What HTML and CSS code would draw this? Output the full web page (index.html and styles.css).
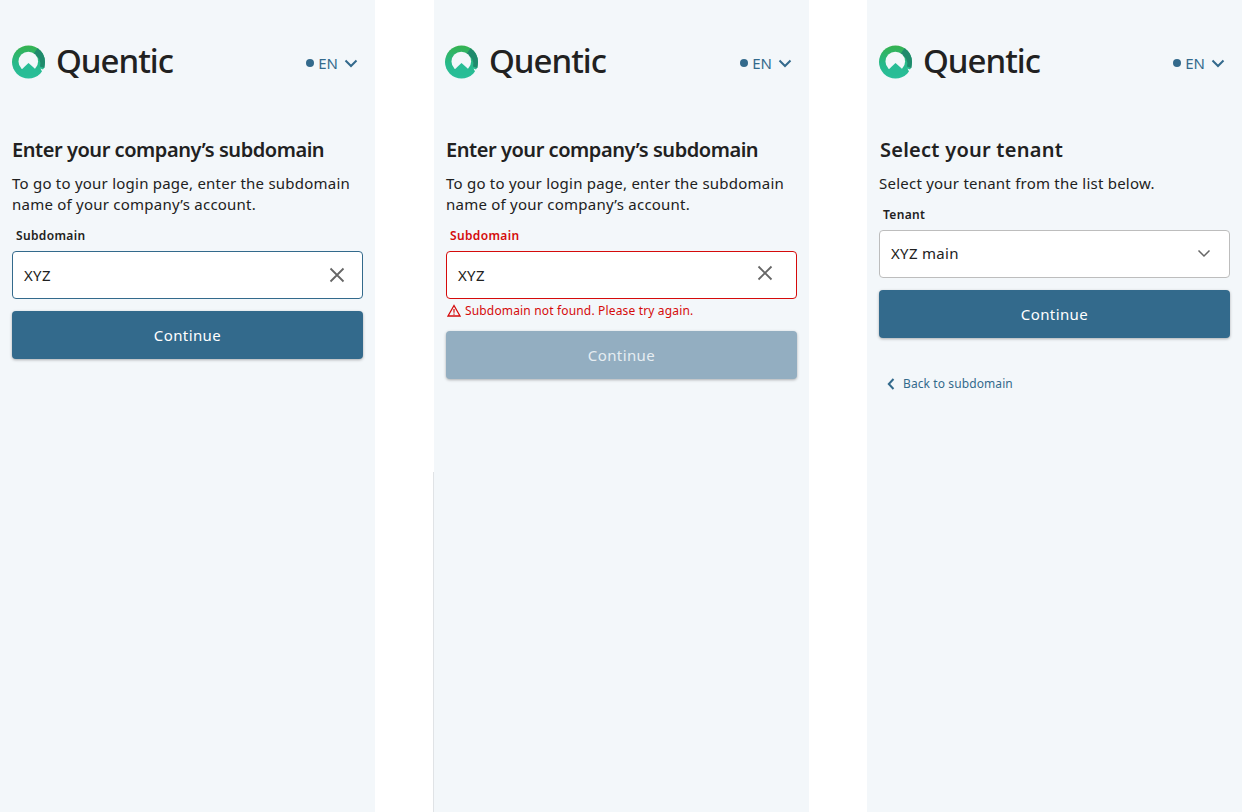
FILE: index.html
```html
<!DOCTYPE html>
<html lang="en">
<head>
    <meta charset="UTF-8">
    <meta name="viewport" content="width=device-width, initial-scale=1.0">
    <title>Quentic - Login</title>
    <link rel="stylesheet" href="styles.css">
</head>
<body>
    <div class="screens">
        <section class="panel">
            <header class="top">
                <div class="logo">
                    <svg class="logo-mark" viewBox="0 0 34 36" width="34" height="36">
                        <defs>
                            <linearGradient id="lg1" x1="0" y1="0" x2="0" y2="1">
                                <stop offset="0" stop-color="#35b24f"/>
                                <stop offset="0.55" stop-color="#27b98a"/>
                                <stop offset="1" stop-color="#2abf9b"/>
                            </linearGradient>
                            <symbol id="mark" viewBox="0 0 34 36">
                                <circle cx="16.500" cy="19" r="16.500" fill="url(#lg1)"/>
                                <path d="M25.500 5.200a16.500 16.500 0 0 1 7.500 13.800l-.5 6-4.500-1.500a10.500 10.500 0 0 0-6.500-12.500z" fill="#1f8a6c"/>
                                <circle cx="16.300" cy="18.500" r="9.800" fill="#f3f7fa"/>
                                <path d="M7 29L16.500 20l9.500 8.500-1 4H9z" fill="#28bd96"/>
                                <path d="M28.500 25.500l5 2-2.500 3z" fill="#f3f7fa"/>
                            </symbol>
                        </defs>
                        <use href="#mark"/>
                    </svg>
                    <span class="logo-text">Quentic</span>
                </div>
                <div class="lang">
                    <span class="lang-dot"></span>
                    <span>EN</span>
                    <svg viewBox="0 0 14 9" width="14" height="9"><path d="M1.500 1.500L7 7l5.500-5.500" fill="none" stroke="#336a8c" stroke-width="2"/></svg>
                </div>
            </header>
            <h2>Enter your company’s subdomain</h2>
            <p class="intro">To go to your login page, enter the subdomain name of your company’s account.</p>
            <label class="field-label">Subdomain</label>
            <div class="field focus">
                <span>XYZ</span>
                <svg viewBox="0 0 16 16" width="16" height="16"><path d="M1.500 1.500l13 13m0-13l-13 13" fill="none" stroke="#666" stroke-width="1.800"/></svg>
            </div>
            <button class="btn">Continue</button>
        </section>

        <section class="panel panel-middle">
            <header class="top">
                <div class="logo">
                    <svg class="logo-mark" viewBox="0 0 34 36" width="34" height="36"><use href="#mark"/></svg>
                    <span class="logo-text">Quentic</span>
                </div>
                <div class="lang">
                    <span class="lang-dot"></span>
                    <span>EN</span>
                    <svg viewBox="0 0 14 9" width="14" height="9"><path d="M1.500 1.500L7 7l5.500-5.500" fill="none" stroke="#336a8c" stroke-width="2"/></svg>
                </div>
            </header>
            <h2>Enter your company’s subdomain</h2>
            <p class="intro">To go to your login page, enter the subdomain name of your company’s account.</p>
            <label class="field-label error-text">Subdomain</label>
            <div class="field error">
                <span>XYZ</span>
                <svg class="clear-up" viewBox="0 0 16 16" width="16" height="16"><path d="M1.500 1.500l13 13m0-13l-13 13" fill="none" stroke="#666" stroke-width="1.800"/></svg>
            </div>
            <div class="error-msg">
                <svg viewBox="0 0 14 13" width="14" height="13"><path d="M7 1.500L13 12H1z" fill="none" stroke="#d50b0b" stroke-width="1.300"/><path d="M7 5v3.800M7 9.600v1.200" stroke="#d50b0b" stroke-width="1.200"/></svg>
                <span>Subdomain not found. Please try again.</span>
            </div>
            <button class="btn btn-disabled">Continue</button>
        </section>

        <section class="panel panel-last">
            <header class="top">
                <div class="logo">
                    <svg class="logo-mark" viewBox="0 0 34 36" width="34" height="36"><use href="#mark"/></svg>
                    <span class="logo-text">Quentic</span>
                </div>
                <div class="lang">
                    <span class="lang-dot"></span>
                    <span>EN</span>
                    <svg viewBox="0 0 14 9" width="14" height="9"><path d="M1.500 1.500L7 7l5.500-5.500" fill="none" stroke="#336a8c" stroke-width="2"/></svg>
                </div>
            </header>
            <h2 class="title-wide">Select your tenant</h2>
            <p class="intro">Select your tenant from the list below.</p>
            <label class="field-label">Tenant</label>
            <div class="field select">
                <span>XYZ main</span>
                <svg viewBox="0 0 14 9" width="14" height="9"><path d="M1.500 1.500L7 7l5.500-5.500" fill="none" stroke="#666" stroke-width="1.500"/></svg>
            </div>
            <button class="btn">Continue</button>
            <a class="back">
                <svg viewBox="0 0 8 12" width="8" height="12"><path d="M6.500 1L1.800 6l4.700 5" fill="none" stroke="#336a8c" stroke-width="2"/></svg>
                <span>Back to subdomain</span>
            </a>
        </section>
    </div>
</body>
</html>
```

FILE: styles.css
```css
html, body {
    margin: 0;
    padding: 0;
    height: 100%;
    background-color: white;
}
body {
    font-family: "Noto Sans", Arial, sans-serif;
    color: #212121;
    overflow: hidden;
}
.screens {
    display: flex;
    height: 812px;
    width: 1242px;
}
.panel {
    width: 375px;
    box-sizing: border-box;
    padding: 43px 12px 0;
    background-color: #f3f7fa;
    flex-shrink: 0;
    position: relative;
}
.panel-middle {
    margin-left: 59px;
}
.panel-middle::before {
    content: "";
    position: absolute;
    left: -1px;
    top: 472px;
    bottom: 0;
    width: 1px;
    background-color: #e0e3e6;
}
.panel-last {
    margin-left: 58px;
}
.top {
    display: flex;
    justify-content: space-between;
    align-items: center;
    height: 36px;
}
.logo {
    display: flex;
    align-items: center;
    gap: 10px;
}
.panel-middle .logo {
    margin-left: -1px;
}
.logo-mark {
    display: block;
}
.logo-text {
    font-size: 33px;
    line-height: 36px;
    font-weight: 500;
    letter-spacing: -1px;
    color: #212121;
}
.lang {
    display: flex;
    align-items: center;
    gap: 4px;
    margin: 4px 5px 0 0;
    font-size: 15px;
    color: #336a8c;
}
.lang svg {
    margin-left: 2px;
}
.lang-dot {
    width: 8px;
    height: 8px;
    border-radius: 50%;
    background-color: #336a8c;
}
h2 {
    margin: 57px 0 0;
    font-size: 20px;
    line-height: 28px;
    font-weight: 600;
    letter-spacing: -0.45px;
    color: #212121;
}
h2.title-wide {
    margin-left: 1px;
    letter-spacing: 0.25px;
}
.intro {
    margin: 9px 0 0;
    font-size: 15px;
    line-height: 21px;
    letter-spacing: 0.23px;
    color: #212121;
}
.field-label {
    display: block;
    margin: 13px 0 0 4px;
    font-size: 12px;
    line-height: 16px;
    font-weight: 600;
    letter-spacing: 0.35px;
    color: #212121;
}
.field {
    display: flex;
    justify-content: space-between;
    align-items: center;
    height: 48px;
    box-sizing: border-box;
    margin-top: 7px;
    padding: 0 17px 0 11px;
    background-color: white;
    border: 1px solid #336a8c;
    border-radius: 4px;
    font-size: 15px;
    letter-spacing: 0.3px;
}
.field.error {
    border-color: #d50b0b;
    padding-right: 23px;
}
.clear-up {
    margin-top: -4px;
}
.field.select {
    border-color: #bdbdbd;
    padding-right: 18px;
    padding-bottom: 2px;
}
.error-msg {
    display: flex;
    align-items: center;
    gap: 4px;
    height: 20px;
    margin: 1px 0 0 1px;
    font-size: 12px;
    letter-spacing: 0.16px;
    color: #d50b0b;
}
.error-text {
    color: #d50b0b;
}
.btn {
    display: block;
    width: 100%;
    height: 48px;
    margin-top: 12px;
    border: none;
    border-radius: 4px;
    background-color: #336a8c;
    color: white;
    font-family: inherit;
    font-size: 15px;
    letter-spacing: 0.4px;
    box-shadow: 0 1px 3px rgba(0, 0, 0, 0.3);
}
.btn-disabled {
    background-color: #93aec1;
    color: #e6edf2;
    margin-top: 11px;
}
.back {
    display: flex;
    align-items: center;
    gap: 8px;
    margin: 37px 0 0 8px;
    font-size: 12px;
    line-height: 17px;
    letter-spacing: 0.1px;
    color: #336a8c;
}
```
